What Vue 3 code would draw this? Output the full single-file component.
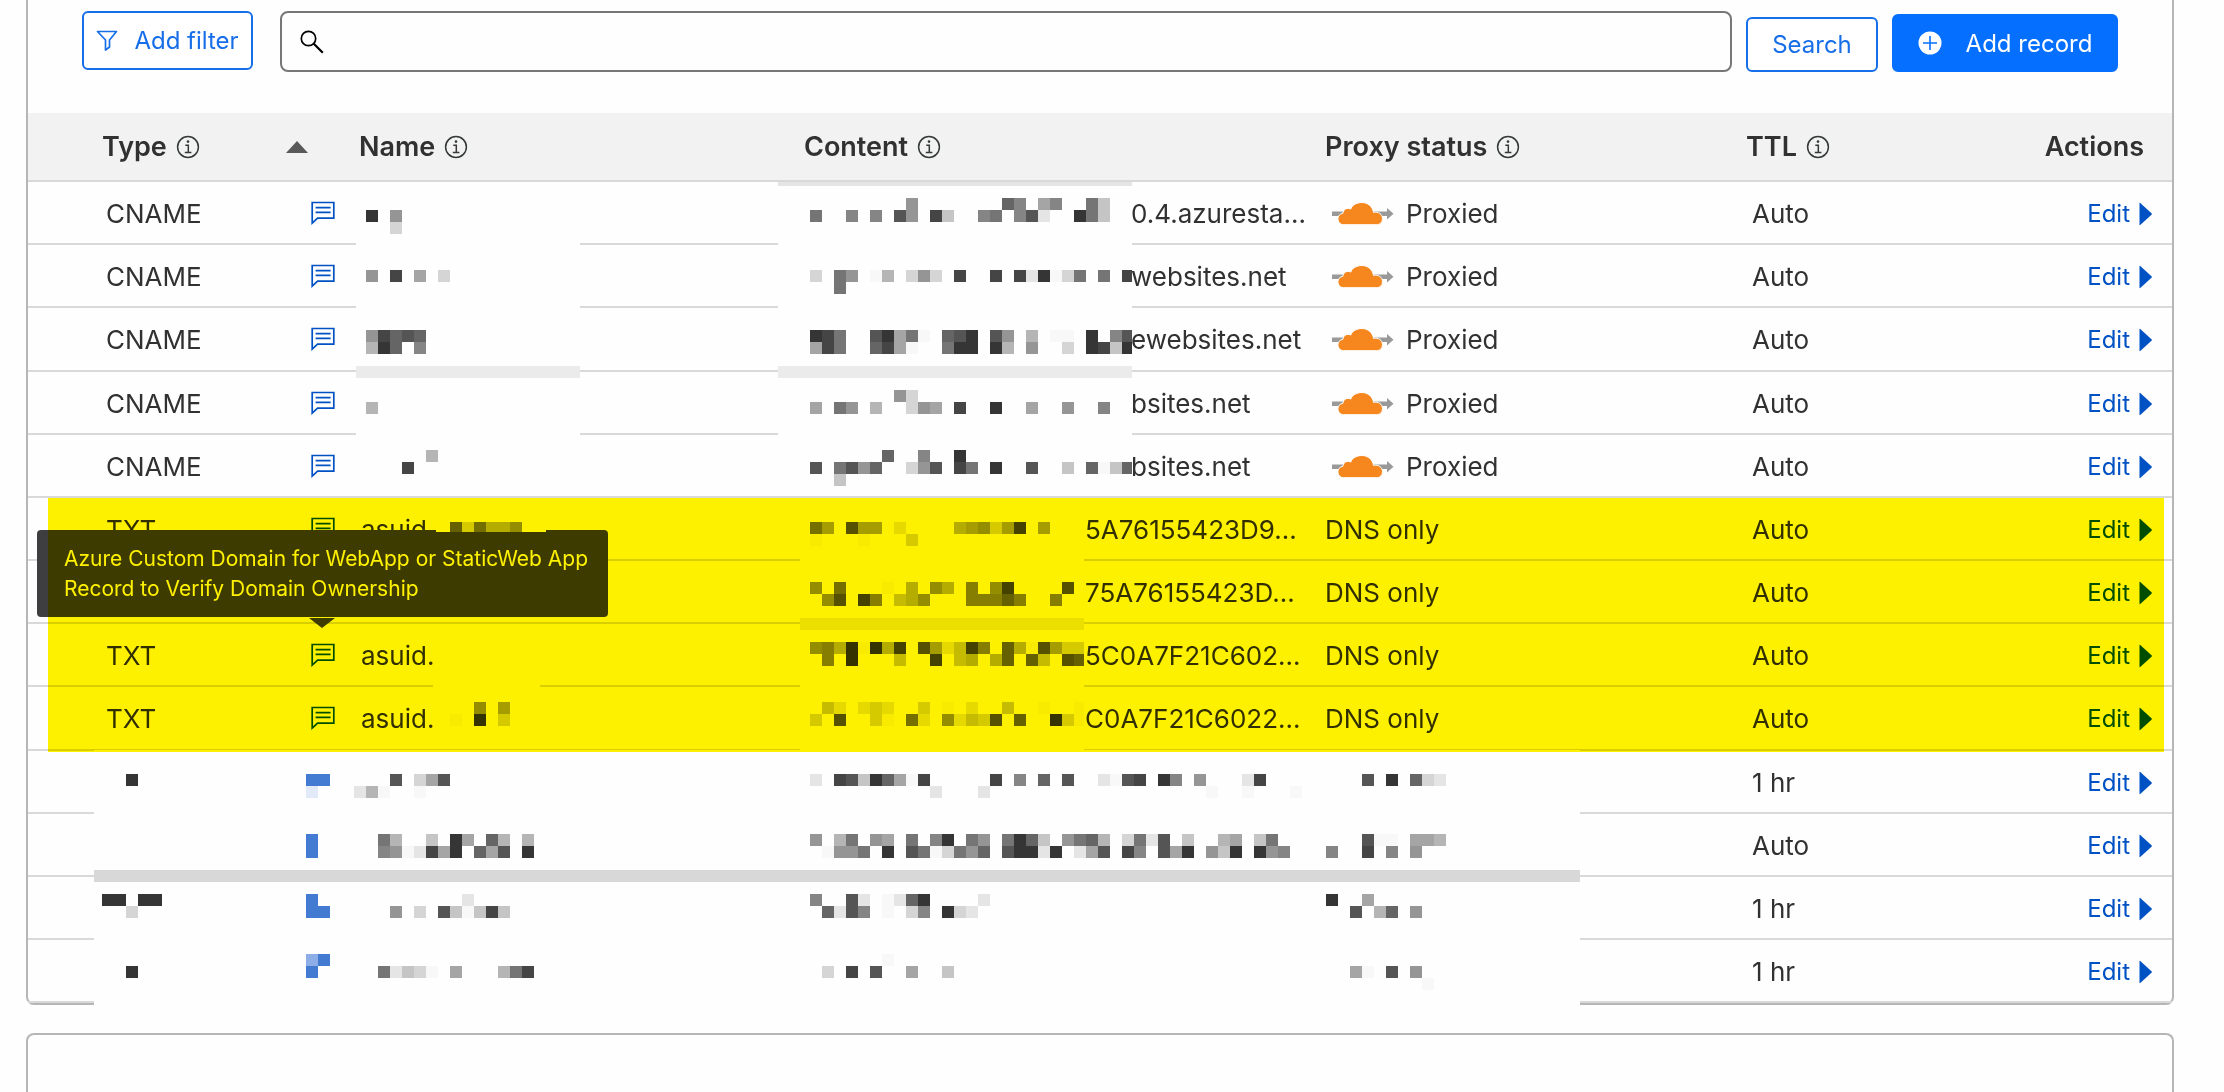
<template>
  <div class="page">
    <section class="panel records">
      <form class="toolbar" @submit.prevent>
        <button type="button" class="btn outline filter">
          <svg width="22" height="22" viewBox="0 0 22 22" fill="none" stroke="currentColor" stroke-width="1.7" stroke-linejoin="round">
            <path d="M1.5 1.5h19l-7 8.500v7l-4 3v-10z" />
          </svg>
          Add filter
        </button>
        <label class="search">
          <svg width="24" height="24" viewBox="0 0 24 24" fill="none" stroke="#000" stroke-width="1.7">
            <circle cx="8.5" cy="8.5" r="7.2" />
            <path d="M13.800 13.800l9 9" stroke-width="2.2" />
          </svg>
          <input v-model="query" type="text" aria-label="Search DNS records" />
        </label>
        <button type="submit" class="btn outline submit">Search</button>
        <button type="button" class="btn primary">
          <svg width="24" height="24" viewBox="0 0 24 24">
            <circle cx="12" cy="12" r="11.5" fill="#fff" />
            <path d="M12 5v14M5 12h14" stroke="#056fff" stroke-width="1.6" />
          </svg>
          Add record
        </button>
      </form>

      <div class="table-wrap">
        <table>
          <colgroup>
            <col class="col-type" />
            <col class="col-name" />
            <col class="col-content" />
            <col class="col-proxy" />
            <col class="col-ttl" />
            <col />
          </colgroup>
          <thead>
            <tr>
              <th v-for="h in headers" :key="h" scope="col">
                <div class="head" :class="'head-' + h.toLowerCase()">
                  {{ h }}
                  <svg v-if="h !== 'Actions'" width="24" height="24" viewBox="0 0 24 24" fill="none" stroke="#36393a" stroke-width="1.5">
                    <circle cx="12" cy="12" r="10.4" />
                    <path d="M9.300 10.200h3v7M8.800 17.400h6.600" />
                    <circle cx="12" cy="6.6" r="1.3" fill="#36393a" stroke="none" />
                  </svg>
                  <span v-if="h === 'Type'" class="sort"></span>
                </div>
              </th>
            </tr>
          </thead>
          <tbody>
            <tr v-for="(r, i) in records" :key="i">
              <td>
                <div v-if="r.type" class="type-cell">
                  {{ r.type }}
                  <svg width="24" height="24" viewBox="0 0 24 24" fill="none" stroke="#0051c3" stroke-width="1.7">
                    <path d="M1.200 1.500h21.600v15.600H6.600l-5.400 5z" />
                    <path d="M4.600 6.600h15M4.600 11.400h15" />
                  </svg>
                </div>
              </td>
              <td class="name">{{ r.name }}</td>
              <td><div class="content" :class="r.status">{{ r.content }}</div></td>
              <td>
                <div v-if="r.status === 'proxied'" class="proxy">
                  <svg width="62" height="24" viewBox="0 0 62 24">
                    <path d="M0 9.500h55v-3.500l6.500 5.800-6.500 5.800v-3.500H0z" fill="#999" />
                    <path
                      d="M11.500 22.700a5.600 5.600 0 0 1-5.600-5.800c0-3 2.200-5.300 5-5.600a5.200 5.200 0 0 1 7.800-4.200C20.300 3 24.700.5 30 .5c6 0 10.600 4.200 11.500 9.900 4.900-1.200 9 1.800 9 6.500 0 3.600-2.600 5.800-5.800 5.800z"
                      fill="#f6871f"
                      stroke="#fff"
                      stroke-width="1"
                    />
                  </svg>
                  Proxied
                </div>
                <template v-else-if="r.status === 'dns'">DNS only</template>
              </td>
              <td class="ttl">{{ r.ttl }}</td>
              <td>
                <button type="button" class="edit">
                  Edit
                  <svg width="13" height="24" viewBox="0 0 13 24">
                    <path d="M.5 1.500q0-1.200 1-.3L12.500 11.300q.6.700 0 1.400L1.500 22.800q-1 .9-1-.3z" fill="currentColor" />
                  </svg>
                </button>
              </td>
            </tr>
          </tbody>
        </table>

        <div class="tooltip" role="tooltip">
          Azure Custom Domain for WebApp or StaticWeb App<br />
          Record to Verify Domain Ownership
        </div>

        <!-- pixelated areas, 12px grid -->
        <svg class="mosaic" aria-hidden="true" shape-rendering="crispEdges">
          <g v-for="(p, i) in patches" :key="i">
            <rect :x="p.x" :y="p.y" :width="p.w" :height="p.h" fill="#fefefe" />
            <rect v-for="(b, j) in p.bars" :key="'b' + j" :x="p.x" :y="b.y" :width="p.w" :height="b.h" :fill="b.fill" />
            <rect v-for="(c, j) in cells(p)" :key="j" :x="c.x" :y="c.y" :width="c.w" :height="c.h" :fill="c.fill" />
          </g>
        </svg>

        <div class="marker"></div>
      </div>
    </section>

    <section class="panel next"></section>
  </div>
</template>

<script setup>
import { ref } from 'vue'

const query = ref('')

const headers = ['Type', 'Name', 'Content', 'Proxy status', 'TTL', 'Actions']

const cname = content => ({ type: 'CNAME', name: '', content, status: 'proxied', ttl: 'Auto' })
const txt = content => ({ type: 'TXT', name: 'asuid.', content, status: 'dns', ttl: 'Auto' })
const hidden = ttl => ({ type: '', name: '', content: '', status: '', ttl })

const records = [
  cname('0.4.azuresta...'),
  cname('websites.net'),
  cname('ewebsites.net'),
  cname('bsites.net'),
  cname('bsites.net'),
  txt('5A76155423D9...'),
  // type and name sit behind the tooltip
  { type: '', name: '', content: '75A76155423D...', status: 'dns', ttl: 'Auto' },
  txt('5C0A7F21C602...'),
  txt('C0A7F21C6022...'),
  hidden('1 hr'),
  hidden('Auto'),
  hidden('1 hr'),
  hidden('1 hr')
]

// each run: [column, row, shades], a shade is one hex digit, a dot is empty
const patches = [
  {
    x: 328, y: 69, w: 224, h: 314,
    bars: [{ y: 253, h: 12, fill: '#ebebeb' }],
    runs: [
      [28, 8, '3.9'],
      [30, 9, 'd'],
      [28, 13, '9.4.a.d'],
      [28, 18, '94656'],
      [28, 19, 'b36.8'],
      [28, 24, 'b'],
      [33, 28, 'b'],
      [31, 29, '4']
    ]
  },
  {
    x: 750, y: 69, w: 354, h: 314,
    bars: [
      { y: 69, h: 4, fill: '#e5e5e5' },
      { y: 253, h: 12, fill: '#ebebeb' }
    ],
    runs: [
      [73, 7, '9.......68.a8..7c'],
      [65, 8, '7..8.8.59.4c..87.85e..37c'],
      [65, 13, 'd.79.fb.d9d.4..4.4e3fd7.7.4'],
      [67, 14, '7'],
      [65, 18, '347..53a7f.653.59.b.ff.3.85'],
      [65, 19, 'a47..64af..733.3b.9..d.34c3'],
      [72, 23, '9d'],
      [65, 24, 'a.79.b..d9a.4..3..a..9..8'],
      [71, 28, '6..8..3'],
      [65, 29, '5.7596..d95.47.3..5..c.6fc6'],
      [67, 30, 'c']
    ]
  },
  {
    x: 408, y: 387, w: 110, h: 32,
    runs: [[35, 34, '6d7bb9']]
  },
  {
    x: 405, y: 530, w: 107, h: 103,
    runs: [
      [37, 49, '9.a'],
      [35, 50, 'f.3.d']
    ]
  },
  {
    x: 772, y: 385, w: 284, h: 254,
    bars: [{ y: 505, h: 12, fill: '#ebebeb' }],
    runs: [
      [65, 34, '7a.5aa.e....ba9da4.a'],
      [65, 35, 'f...f...d'],
      [65, 39, '9.7...f.b.9b.8.94....5'],
      [65, 40, '.95.48.cb9...88868..8'],
      [65, 44, '98b3f3b4.5aec48.6bf5add'],
      [65, 45, '.8.3...c..4.cb.b6.6c.56'],
      [65, 49, '.ce.ede..d.f.e..c..f..f'],
      [65, 50, 'd.5..df.7e.9ecd5.6..3df']
    ]
  },
  {
    x: 66, y: 637, w: 1486, h: 258,
    bars: [{ y: 757, h: 12, fill: '#d8d8d8' }],
    runs: [
      [8, 55, '3'],
      [6, 65, '33.33'],
      [8, 66, 'd'],
      [8, 71, '3'],
      [23, 55, 'BB'],
      [23, 56, 'P'],
      [23, 60, 'B'],
      [23, 61, 'B'],
      [23, 65, 'B'],
      [23, 66, 'BB'],
      [23, 70, 'LB'],
      [23, 71, 'B'],
      [30, 55, '5.da5'],
      [27, 56, 'ebf..f'],
      [29, 60, '7b..c.3a.6b.b'],
      [29, 61, '89fe4a3.6a5.3'],
      [36, 65, 'e'],
      [30, 66, '9.d.5cfc4c'],
      [29, 71, '7ecdf.a...b74'],
      [65, 55, 'e.45c36af4.....4.8.6.5..ef54.38.9...e4'],
      [75, 56, 'e...e'],
      [98, 56, 'f..f...f'],
      [65, 60, '9.b7.9a.7.83.79.736c.976b.d7e5.c..ba.c7'],
      [65, 61, '.f997.3.57fd796.533e3.ea5.48.5a3.9c3.398'],
      [65, 65, '8..5e.fe63....e'],
      [65, 66, '.6e58.f.d8.3de'],
      [71, 70, 'f'],
      [65, 71, '.d.4.5..a..c'],
      [111, 55, '5.3.6de'],
      [111, 60, '5ff.aab'],
      [108, 61, '8..4.8.9'],
      [108, 65, '3..a'],
      [110, 66, '5.b6.9'],
      [110, 71, 'af.5.9'],
      [116, 72, 'f']
    ]
  }
]

const named = { B: '#447bd2', L: '#8cade5', P: '#e2eaf9', f: '#f8f8f8' }

const cells = p => {
  const out = []
  p.runs.forEach(([col, row, shades]) => {
    shades.split('').forEach((s, i) => {
      if (s === '.') return
      const x = 2 + (col + i) * 12
      const y = 1 + row * 12
      out.push({
        x,
        y,
        w: Math.min(12, p.x + p.w - x),
        h: Math.min(12, p.y + p.h - y),
        fill: named[s] || '#' + (s + '5').repeat(3)
      })
    })
  })
  return out
}
</script>

<style>
body {
  margin: 0;
  background: #fefefe;
}
</style>

<style scoped>
.page {
  display: flex;
  flex-direction: column;
  gap: 28px;
  box-sizing: border-box;
  min-height: 100vh;
  padding: 0 50px 0 26px;
  background: #fefefe;
  color: #313131;
  font-family: Inter, "Liberation Sans", sans-serif;
  font-size: 26px;
}

.panel {
  border: 2px solid #b6b6b6;
  border-radius: 8px;
}

.records {
  border-top: none;
  border-top-left-radius: 0;
  border-top-right-radius: 0;
}

.next {
  flex: 1;
  border-bottom: none;
  border-bottom-left-radius: 0;
  border-bottom-right-radius: 0;
}

.toolbar {
  display: flex;
  align-items: flex-end;
  gap: 14px;
  padding: 11px 54px 41px;
}

.btn {
  display: flex;
  align-items: center;
  justify-content: center;
  box-sizing: border-box;
  border: 2px solid #166ee8;
  border-radius: 6px;
  background: #fff;
  color: #166ee8;
  font-family: inherit;
  font-size: 24px;
  white-space: nowrap;
  cursor: pointer;
}

.filter {
  align-self: flex-start;
  gap: 16px;
  width: 171px;
  height: 59px;
  margin-right: 13px;
  padding: 0;
}

.submit {
  width: 132px;
  height: 55px;
}

.primary {
  gap: 24px;
  width: 226px;
  height: 58px;
  padding: 0;
  border-color: #056fff;
  background: #056fff;
  color: #fff;
}

.search {
  display: flex;
  flex: 1;
  align-items: center;
  gap: 12px;
  box-sizing: border-box;
  height: 61px;
  padding: 0 18px;
  border: 2px solid #777;
  border-radius: 8px;
}

.search input {
  flex: 1;
  min-width: 0;
  border: none;
  outline: none;
  background: transparent;
  font: inherit;
}

.table-wrap {
  position: relative;
}

table {
  width: 100%;
  table-layout: fixed;
  border-collapse: separate;
  border-spacing: 0;
}

.col-type {
  width: 331px;
}

.col-name {
  width: 445px;
}

.col-content {
  width: 521px;
}

.col-proxy {
  width: 421px;
}

.col-ttl {
  width: 240px;
}

th,
td {
  box-sizing: border-box;
  height: 63px;
  padding: 2px 0 0;
  border-bottom: 2px solid #d9d9d9;
  line-height: 32px;
  text-align: left;
  white-space: nowrap;
}

th {
  height: 69px;
  padding: 0;
  background: #f2f2f2;
  font-size: 27px;
  font-weight: 600;
}

/* keeps the rows on the 63 1/6 rhythm */
tbody tr:nth-child(6n + 3) td {
  height: 64px;
}

.head {
  display: flex;
  align-items: center;
  gap: 9px;
}

.head-type {
  padding: 0 51px 0 74px;
}

.head-actions {
  justify-content: flex-end;
  padding-right: 28px;
}

.sort {
  margin-left: auto;
  border: 11px solid transparent;
  border-top: none;
  border-bottom: 12px solid #595959;
}

.type-cell {
  display: flex;
  align-items: center;
  justify-content: space-between;
  padding: 0 24px 0 78px;
}

.type-cell svg {
  margin-bottom: 2px;
}

.name {
  padding-left: 2px;
}

.content.proxied {
  padding-left: 327px;
}

.content.dns {
  padding-left: 281px;
}

.proxy {
  display: flex;
  align-items: center;
  gap: 12px;
  padding-left: 7px;
}

.ttl {
  padding-left: 6px;
}

.edit {
  display: flex;
  align-items: center;
  gap: 9px;
  margin-left: auto;
  padding: 0 20px 0 0;
  border: none;
  background: none;
  color: #0051c3;
  font-family: inherit;
  font-size: 24px;
  line-height: 32px;
  cursor: pointer;
}

.tooltip {
  position: absolute;
  top: 417px;
  left: 9px;
  padding: 14px 20px 13px 27px;
  border-radius: 4px;
  background: #3e3e40;
  color: #fff;
  font-size: 21px;
  line-height: 30px;
  white-space: nowrap;
}

.tooltip::after {
  content: "";
  position: absolute;
  top: 88px;
  left: 272px;
  border: 13px solid transparent;
  border-top: 10px solid #3e3e40;
  border-bottom: none;
}

.mosaic {
  position: absolute;
  top: 0;
  left: 0;
  width: 100%;
  height: 100%;
  overflow: visible;
  pointer-events: none;
}

.marker {
  position: absolute;
  top: 385px;
  right: 8px;
  left: 20px;
  height: 254px;
  background: #fff200;
  mix-blend-mode: multiply;
  pointer-events: none;
}
</style>
